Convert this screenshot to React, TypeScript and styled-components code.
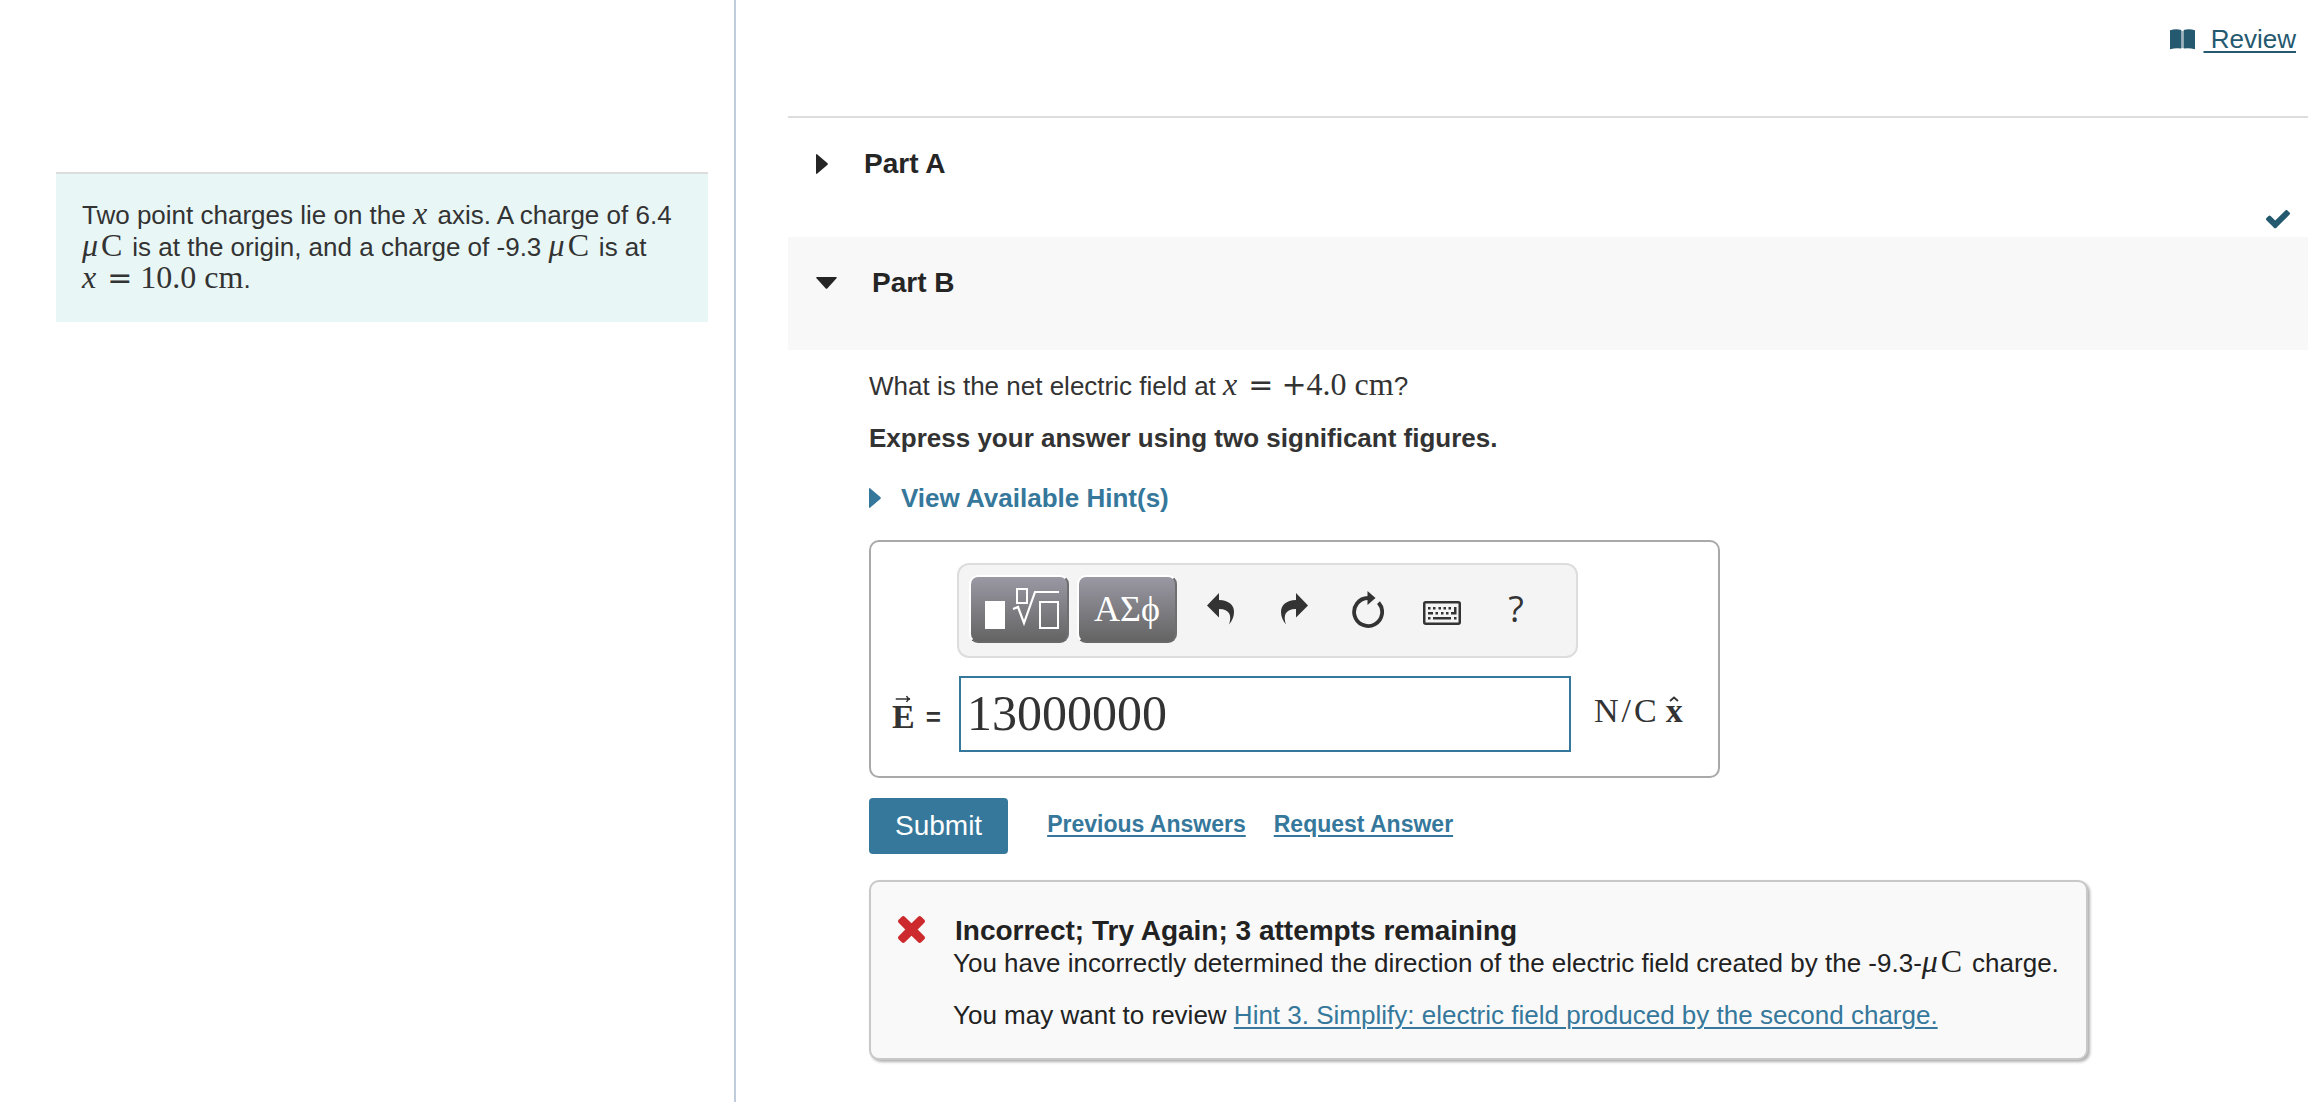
import React, { useState } from "react";
import styled, { createGlobalStyle } from "styled-components";

const sans = `"Liberation Sans", Arial, Helvetica, sans-serif`;
const serif = `"Liberation Serif", "Times New Roman", serif`;

const color = {
  text: "#333333",
  heading: "#252525",
  link: "#36789b",
  deep: "#24596f",
  band: "#f8f8f8",
};

const GlobalStyle = createGlobalStyle`
  *, *::before, *::after { box-sizing: border-box; }
  body {
    margin: 0;
    background: #ffffff;
    color: ${color.text};
    font-family: ${sans};
    font-size: 26px;
    line-height: 32px;
  }
  p, h2 { margin: 0; }
  svg { display: block; flex: none; }
  button { font: inherit; cursor: pointer; }
`;

const Page = styled.div`
  display: grid;
  grid-template-columns: 736fr 1572fr;
  min-height: 100vh;
`;

const Sidebar = styled.aside`
  border-right: 2px solid #c0cbdc;
  padding: 172px 26px 0 56px;
`;

const Problem = styled.p`
  border-top: 2px solid #dddddd;
  background: #e8f6f6;
  padding: 25px 26px 27px;
`;

const Main = styled.main`
  display: flex;
  flex-direction: column;
  padding-left: 52px;
  min-width: 0;
`;

const TopBar = styled.header`
  display: flex;
  justify-content: flex-end;
  padding: 23px 12px 61px;
`;

const ReviewLink = styled.a`
  display: flex;
  align-items: center;
  gap: 9px;
  color: ${color.deep};
  text-decoration: none;

  span {
    white-space: pre;
    text-decoration: underline;
    text-decoration-thickness: 2px;
    text-underline-offset: 3px;
  }
`;

const PartRow = styled.section<{ $open?: boolean }>`
  padding: 30px 18px ${(p) => (p.$open ? 51 : 8)}px 28px;
  background: ${(p) => (p.$open ? color.band : "transparent")};
  border-top: ${(p) => (p.$open ? "none" : "2px solid #dddddd")};
`;

const PartToggle = styled.button<{ $gap: number }>`
  display: flex;
  align-items: center;
  gap: ${(p) => p.$gap}px;
  padding: 0;
  border: 0;
  background: none;
  color: ${color.heading};
  font-size: 28px;
  font-weight: bold;
  line-height: 32px;
`;

const Status = styled.div`
  display: flex;
  justify-content: flex-end;
  padding-top: 30px;
  color: ${color.deep};
`;

const Body = styled.div`
  display: flex;
  flex-direction: column;
  align-items: flex-start;
  padding: 20px 24px 40px 81px;
`;

const Instruction = styled.p`
  margin-top: 20px;
  font-weight: bold;
`;

const HintToggle = styled.button`
  display: flex;
  align-items: center;
  gap: 20px;
  margin: 28px 0 26px;
  padding: 0;
  border: 0;
  background: none;
  color: ${color.link};
  font-weight: bold;
`;

const AnswerBox = styled.div`
  display: grid;
  grid-template-columns: 86px 621px 140px;
  row-gap: 18px;
  align-items: center;
  border: 2px solid #a9a9a9;
  border-radius: 10px;
  padding: 21px 0 24px;
`;

const Toolbar = styled.div`
  grid-column: 2;
  display: flex;
  align-items: center;
  padding: 10px 10px 13px;
  border: 2px solid #dddddd;
  border-radius: 12px;
  background: #f4f4f4;
`;

const PaletteButton = styled.button`
  display: flex;
  align-items: center;
  justify-content: center;
  width: 100px;
  height: 68px;
  margin-right: 8px;
  padding: 0;
  border: 2px solid;
  border-color: #ffffff #6f6f72 #686868 #ffffff;
  border-radius: 9px;
  background: linear-gradient(#9a98a3, #646464);
  color: #ffffff;
  font-family: ${serif};
  font-size: 36px;
`;

const Tools = styled.div`
  display: flex;
  margin-left: -2px;
`;

const ToolButton = styled.button`
  display: flex;
  align-items: center;
  justify-content: center;
  width: 74px;
  height: 68px;
  padding: 0;
  border: 0;
  background: none;
  color: ${color.text};
  font-family: "Open Sans", ${sans};
  font-size: 36px;
`;

const Field = styled.input`
  width: 612px;
  height: 76px;
  margin-left: 2px;
  padding: 0 6px 2px;
  border: 2px solid ${color.link};
  border-radius: 0;
  outline: 0;
  background: #ffffff;
  color: ${color.text};
  font-family: ${serif};
  font-size: 50px;
`;

const FieldLabel = styled.label`
  grid-column: 1;
  display: flex;
  align-items: center;
  gap: 11px;
  padding: 6px 0 0 21px;
  font-weight: bold;
`;

const Unit = styled.span`
  display: flex;
  align-items: center;
  gap: 3px;
  padding: 0 0 6px 16px;
  font-family: ${serif};
  font-size: 34px;
`;

const Accent = styled.span`
  position: relative;
  font-family: ${serif};
  font-size: 34px;
  font-weight: bold;

  svg {
    position: absolute;
    bottom: 100%;
    left: 50%;
    margin-bottom: -2px;
    transform: translateX(-50%);
  }
`;

const UnitVector = styled(Accent)`
  margin-left: 6px;

  svg {
    margin-bottom: -7px;
  }
`;

const Actions = styled.div`
  display: flex;
  align-items: center;
  gap: 28px;
  margin: 20px 0 26px;
`;

const Submit = styled.button`
  height: 56px;
  margin-right: 11px;
  padding: 0 26px;
  border: 0;
  border-radius: 4px;
  background: ${color.link};
  color: #ffffff;
  font-size: 28px;
`;

const TextLink = styled.a<{ $strong?: boolean }>`
  color: ${color.link};
  font-size: ${(p) => (p.$strong ? "23px" : "inherit")};
  font-weight: ${(p) => (p.$strong ? "bold" : "normal")};
  padding-bottom: ${(p) => (p.$strong ? 4 : 0)}px;
  text-decoration: underline;
  text-decoration-thickness: 2px;
  text-underline-offset: 3px;
`;

const Feedback = styled.section`
  display: grid;
  grid-template-columns: auto auto;
  column-gap: 28px;
  padding: 33px 27px 27px;
  border: 2px solid #c8c8c8;
  border-radius: 10px;
  background: #f9f9f9;
  box-shadow: 2px 2px 3px #b0b0b0;
  color: #222222;

  > svg {
    margin-top: 1px;
    color: #cc2a2c;
  }
`;

const FeedbackTitle = styled.h2`
  padding-left: 2px;
  font-size: 28px;
  line-height: 32px;
`;

const FeedbackText = styled.p`
  & + & {
    margin-top: 20px;
  }
`;

const MathText = styled.span`
  font-family: ${serif};
  font-size: 32px;
  line-height: 0;
  white-space: nowrap;
`;

const Variable = styled.i`
  margin: 0 3px 0 0;
`;

const Relation = styled.span<{ $gap: number }>`
  margin: 0 ${(p) => p.$gap}px;
  font-family: "DejaVu Sans", sans-serif;
  font-size: 30px;
`;

const MicroCoulomb = () => (
  <MathText>
    <Variable>μ</Variable>C{"\u200a"}
  </MathText>
);

const BookIcon = () => (
  <svg width="25" height="21" viewBox="0 0 25 21" fill="currentColor" aria-hidden="true">
    <path d="M0 1.200Q6-.4 11.300 1V19.500Q6 18.500 0 20.200Z" />
    <path d="M13.700 1Q19-.4 25 1.200V20.200Q19 18.500 13.700 19.500Z" />
    <path d="M11.300 2H13.700V19H11.300Z" opacity=".45" />
  </svg>
);

const CheckIcon = () => (
  <svg width="24" height="19" viewBox="121 370 1550 1160" fill="currentColor" role="img" aria-label="Correct">
    <path d="M1671 566q0 40-28 68l-724 724-136 136q-28 28-68 28t-68-28l-136-136-362-362q-28-28-28-68t28-68l136-136q28-28 68-28t68 28l294 295 656-657q28-28 68-28t68 28l136 136q28 28 28 68z" />
  </svg>
);

const CrossIcon = () => (
  <svg width="27" height="27" viewBox="302 366 1188 1188" fill="currentColor" role="img" aria-label="Incorrect">
    <path d="M1490 1322q0 40-28 68l-136 136q-28 28-68 28t-68-28l-294-294-294 294q-28 28-68 28t-68-28l-136-136q-28-28-28-68t28-68l294-294-294-294q-28-28-28-68t28-68l136-136q28-28 68-28t68 28l294 294 294-294q28-28 68-28t68 28l136 136q28 28 28 68t-28 68l-294 294 294 294q28 28 28 68z" />
  </svg>
);

const TriangleRight = () => (
  <svg width="12" height="20" viewBox="0 0 12 20" fill="currentColor" aria-hidden="true">
    <path d="M0 1Q0-.6 1.300.5L11.300 9Q12.300 10 11.300 11L1.300 19.500Q0 20.600 0 19Z" />
  </svg>
);

const TriangleDown = () => (
  <svg width="21" height="12" viewBox="0 0 21 12" fill="currentColor" aria-hidden="true">
    <path d="M1 0H20Q21.500 0 20.500 1.300L11.500 11.300Q10.500 12.300 9.500 11.300L.5 1.300Q-.5 0 1 0Z" />
  </svg>
);

const TemplateIcon = () => (
  <svg width="96" height="64" viewBox="0 0 96 64" fill="none" stroke="#ffffff" aria-hidden="true">
    <rect x="14" y="24" width="20" height="28" fill="#ffffff" stroke="none" />
    <rect x="46" y="12" width="10" height="14" strokeWidth="2" />
    <path d="M42 32L47 30L53 46L64 15H88" strokeWidth="2.200" />
    <rect x="69" y="25" width="18" height="26" strokeWidth="2" />
  </svg>
);

const ArrowIcon = ({ flip }: { flip?: boolean }) => (
  <svg width="27" height="32" viewBox="0 0 27 32" fill="currentColor" aria-hidden="true">
    <path
      transform={flip ? "translate(27 0) scale(-1 1)" : undefined}
      d="M0 12.500L12 0V7C22 7.500 27 12 27 19C27 24 25 28 22 31.500C25 23 23 16 12 16V24.500Z"
    />
  </svg>
);

const ResetIcon = () => (
  <svg width="32" height="38" viewBox="0 0 32 38" aria-hidden="true">
    <path d="M26.500 12.600A14 14 0 1 1 16 8" fill="none" stroke="currentColor" strokeWidth="3.800" />
    <path d="M15.500 1L23.500 8L15.500 15Z" fill="currentColor" />
  </svg>
);

const KeyboardIcon = () => (
  <svg width="38" height="32" viewBox="0 0 38 32" fill="currentColor" aria-hidden="true">
    <rect x="1.250" y="9.250" width="35.500" height="21.500" rx="1.500" fill="none" stroke="currentColor" strokeWidth="2.500" />
    <path d="M5 14h2.500v2.500H5zM10 14h2.500v2.500H10zM15.500 14H18v2.500h-2.500zM20.500 14H23v2.500h-2.500zM25.500 14H28v2.500h-2.500zM31 14h2.500v7.500H28V19h3z" />
    <path d="M5 19h5v2.500H5zM12.500 19H15v2.500h-2.500zM18 19h2.500v2.500H18zM23 19h2.500v2.500H23z" />
    <path d="M5 24h2.500v2.500H5zM10 24h18v2.500H10zM31 24h2.500v2.500H31z" />
  </svg>
);

const VectorArrow = () => (
  <svg width="15" height="8" viewBox="0 0 15 8" fill="none" stroke="currentColor" strokeWidth="1.500" aria-hidden="true">
    <path d="M0 4H14M11 1Q12 3.500 14.500 4Q12 4.500 11 7" />
  </svg>
);

const Hat = () => (
  <svg width="10" height="6" viewBox="0 0 10 6" fill="none" stroke="currentColor" strokeWidth="1.800" aria-hidden="true">
    <path d="M1 5L5 1.500L9 5" />
  </svg>
);

export default function App() {
  const [answer, setAnswer] = useState("13000000");

  return (
    <>
      <GlobalStyle />
      <Page>
        <Sidebar>
          <Problem>
            Two point charges lie on the{" "}
            <MathText>
              <Variable>x</Variable>
            </MathText>{" "}
            axis. A charge of 6.4 <MicroCoulomb /> is at the origin, and a charge of -9.3 <MicroCoulomb /> is at{" "}
            <MathText>
              <Variable>x</Variable>
              <Relation $gap={8}>=</Relation>10.0 cm
            </MathText>
            .
          </Problem>
        </Sidebar>

        <Main>
          <TopBar>
            <ReviewLink href="#review">
              <BookIcon />
              <span> Review</span>
            </ReviewLink>
          </TopBar>

          <PartRow>
            <PartToggle type="button" aria-expanded={false} $gap={36}>
              <TriangleRight />
              Part A
            </PartToggle>
            <Status>
              <CheckIcon />
            </Status>
          </PartRow>

          <PartRow $open>
            <PartToggle type="button" aria-expanded $gap={35}>
              <TriangleDown />
              Part B
            </PartToggle>
          </PartRow>

          <Body>
            <p>
              What is the net electric field at{" "}
              <MathText>
                <Variable>x</Variable>
                <Relation $gap={8}>=</Relation>
                <Relation $gap={0}>+</Relation>4.0 cm
              </MathText>
              ?
            </p>
            <Instruction>Express your answer using two significant figures.</Instruction>
            <HintToggle type="button" aria-expanded={false}>
              <TriangleRight />
              View Available Hint(s)
            </HintToggle>

            <AnswerBox>
              <Toolbar role="toolbar" aria-label="Equation editor">
                <PaletteButton type="button" aria-label="Templates">
                  <TemplateIcon />
                </PaletteButton>
                <PaletteButton type="button">ΑΣϕ</PaletteButton>
                <Tools>
                  <ToolButton type="button" aria-label="Undo">
                    <ArrowIcon />
                  </ToolButton>
                  <ToolButton type="button" aria-label="Redo">
                    <ArrowIcon flip />
                  </ToolButton>
                  <ToolButton type="button" aria-label="Reset">
                    <ResetIcon />
                  </ToolButton>
                  <ToolButton type="button" aria-label="Keyboard shortcuts">
                    <KeyboardIcon />
                  </ToolButton>
                  <ToolButton type="button">?</ToolButton>
                </Tools>
              </Toolbar>
              <FieldLabel htmlFor="answer">
                <Accent>
                  <VectorArrow />E
                </Accent>
                =
              </FieldLabel>
              <Field id="answer" value={answer} onChange={(e) => setAnswer(e.target.value)} />
              <Unit>
                <span>N</span>
                <span>/</span>
                <span>C</span>
                <UnitVector>
                  <Hat />x
                </UnitVector>
              </Unit>
            </AnswerBox>

            <Actions>
              <Submit type="submit">Submit</Submit>
              <TextLink $strong href="#previous">
                Previous Answers
              </TextLink>
              <TextLink $strong href="#request">
                Request Answer
              </TextLink>
            </Actions>

            <Feedback>
              <CrossIcon />
              <div>
                <FeedbackTitle>Incorrect; Try Again; 3 attempts remaining</FeedbackTitle>
                <FeedbackText>
                  You have incorrectly determined the direction of the electric field created by the -9.3-
                  <MicroCoulomb /> charge.
                </FeedbackText>
                <FeedbackText>
                  You may want to review{" "}
                  <TextLink href="#hint3">Hint 3. Simplify: electric field produced by the second charge.</TextLink>
                </FeedbackText>
              </div>
            </Feedback>
          </Body>
        </Main>
      </Page>
    </>
  );
}
